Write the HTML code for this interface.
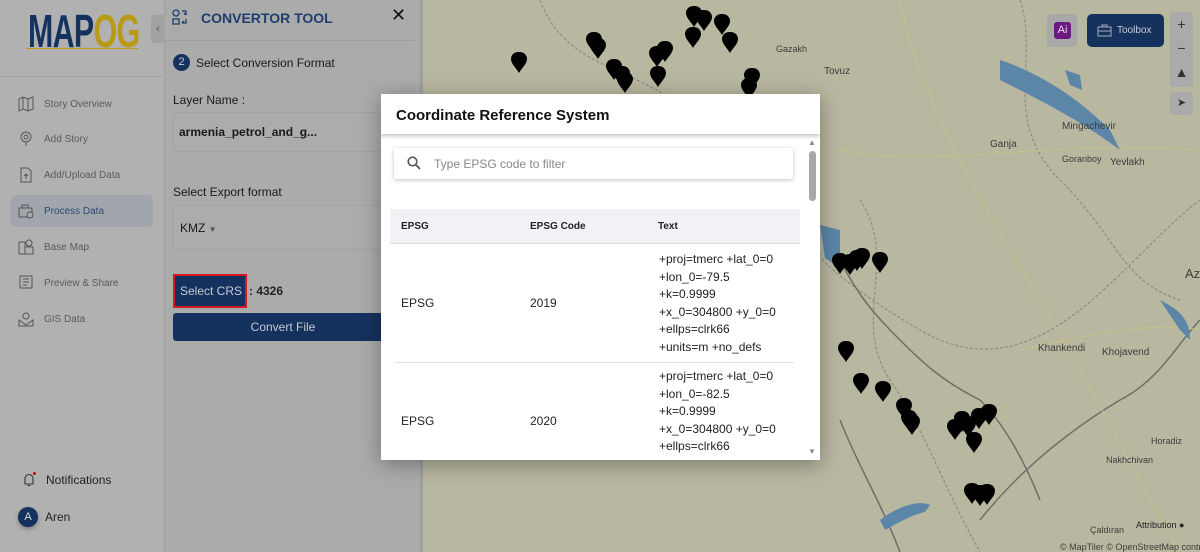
<!DOCTYPE html>
<html><head><meta charset="utf-8"><style>
*{box-sizing:border-box;margin:0;padding:0}
body{width:1200px;height:552px;overflow:hidden;position:relative;font-family:"Liberation Sans",sans-serif;background:#b5b69e}
.abs{position:absolute}
#map{left:420px;top:0;width:780px;height:552px;background:#b8b7a0;overflow:hidden}
.lbl{position:absolute;font-size:10px;color:#3c3c3c;white-space:nowrap}
#side{left:0;top:0;width:165px;height:552px;background:#b1b1b1;border-right:1px solid #9e9e9e}
#panel{left:165px;top:0;width:258px;height:552px;background:#ababab;border-right:3px solid #a0a0a0}
.nav{position:absolute;left:18px;font-size:10px;color:#5a5a5a;display:flex;align-items:center}
.nav svg{margin-right:10px}
</style></head><body>
<div id="map" class="abs">
<svg width="780" height="552" style="position:absolute;left:0;top:0">
<g fill="none" stroke="#8d8d80" stroke-width="1.2" stroke-dasharray="3,2">
<path d="M120 0 C150 80 230 60 300 140 S 380 260 500 330 S 700 260 780 200"/>
<path d="M440 200 C480 260 430 320 470 380 S 520 480 560 552"/>
<path d="M600 0 C620 60 580 120 640 180 S 700 280 760 300"/>
</g>
<g fill="none" stroke="#6e6e66" stroke-width="1.5">
<path d="M420 260 C440 300 460 320 480 340 C500 360 520 380 560 400 C580 420 600 450 620 500"/>
<path d="M420 420 C440 470 460 500 480 552"/>
<path d="M560 520 C600 470 650 430 700 400 C740 380 760 340 780 320"/>
</g>
<g fill="none" stroke="#c9c08a" stroke-width="1">
<path d="M420 150 C520 170 600 140 780 150"/><path d="M480 0 C500 100 560 200 620 300 S 700 450 760 552"/>
<path d="M600 350 C650 340 720 320 780 330"/>
</g>
<path d="M580 60 C610 70 650 90 690 130 L700 150 C660 120 620 100 580 80Z" fill="#5b86a8"/>
<path d="M645 70 L660 75 L662 90 L650 85Z" fill="#5b86a8"/>
<path d="M400 225 L420 230 L420 268 L405 258Z" fill="#5b86a8"/>
<path d="M460 520 C480 505 500 500 510 505 L505 512 C490 515 475 525 465 530Z" fill="#5b86a8"/>
<path d="M740 300 C760 310 770 320 770 340 L760 330Z" fill="#5b86a8"/>
</svg>
<div class="lbl" style="left:404px;top:66px">Tovuz</div>
<div class="lbl" style="left:356px;top:44px;font-size:9px">Gazakh</div>
<div class="lbl" style="left:642px;top:121px">Mingachevir</div>
<div class="lbl" style="left:570px;top:139px">Ganja</div>
<div class="lbl" style="left:642px;top:154px;font-size:9px">Goranboy</div>
<div class="lbl" style="left:690px;top:157px">Yevlakh</div>
<div class="lbl" style="left:618px;top:343px">Khankendi</div>
<div class="lbl" style="left:682px;top:347px">Khojavend</div>
<div class="lbl" style="left:731px;top:436px;font-size:9px">Horadiz</div>
<div class="lbl" style="left:686px;top:455px;font-size:9px">Nakhchivan</div>
<div class="lbl" style="left:670px;top:525px;font-size:9px">Çaldıran</div>
<div class="lbl" style="left:765px;top:266px;font-size:13px">Az</div>
<div class="lbl" style="left:716px;top:520px;font-size:9px;color:#222">Attribution ●</div>
<div class="lbl" style="left:640px;top:542px;font-size:9px">© MapTiler © OpenStreetMap contributors</div>
<div class="abs" style="left:627px;top:14px;width:30px;height:33px;background:#a8a8a8;border-radius:4px"><div style="margin:8px 7px;width:17px;height:17px;background:#6a1a80;border-radius:3px;color:#ddd;font-size:11px;text-align:center;line-height:17px">Ai</div></div>
<div class="abs" style="left:667px;top:14px;width:77px;height:33px;background:#15325f;border-radius:5px;color:#c8cdd6;font-size:10px;line-height:33px;padding-left:30px">Toolbox</div>
<svg class="abs" style="left:677px;top:24px" width="15" height="13"><rect x="1" y="3" width="13" height="9" fill="none" stroke="#aab" stroke-width="1"/><path d="M5 3V1H10V3 M1 7H14" fill="none" stroke="#aab"/></svg>
<div class="abs" style="left:750px;top:12px;width:23px;height:75px;background:#aaa;border-radius:3px;color:#333;font-size:14px;text-align:center;line-height:24px">+<br>−<br>▲</div>
<div class="abs" style="left:750px;top:92px;width:23px;height:23px;background:#aaa;border-radius:3px;color:#333;font-size:11px;text-align:center;line-height:23px">➤</div>
</div>
<svg class="abs" style="left:0;top:0" width="1200" height="552">
<defs><path id="p" d="M0 -14 C-6 -14 -8 -10 -8 -7 C-8 -2 -2 3 0 7 C2 3 8 -2 8 -7 C8 -10 6 -14 0 -14Z" fill="#000"/></defs>
<g>
<use href="#p" x="519" y="66"/><use href="#p" x="594" y="46"/><use href="#p" x="598" y="52"/><use href="#p" x="614" y="73"/><use href="#p" x="622" y="80"/><use href="#p" x="625" y="86"/>
<use href="#p" x="657" y="60"/><use href="#p" x="665" y="55"/><use href="#p" x="658" y="80"/><use href="#p" x="694" y="20"/><use href="#p" x="704" y="24"/><use href="#p" x="693" y="41"/><use href="#p" x="722" y="28"/><use href="#p" x="730" y="46"/><use href="#p" x="752" y="82"/><use href="#p" x="749" y="92"/>
<use href="#p" x="840" y="267"/><use href="#p" x="850" y="268"/><use href="#p" x="857" y="264"/><use href="#p" x="862" y="262"/><use href="#p" x="880" y="266"/>
<use href="#p" x="846" y="355"/><use href="#p" x="861" y="387"/><use href="#p" x="883" y="395"/><use href="#p" x="904" y="412"/><use href="#p" x="909" y="424"/><use href="#p" x="912" y="428"/>
<use href="#p" x="955" y="433"/><use href="#p" x="962" y="425"/><use href="#p" x="968" y="430"/><use href="#p" x="974" y="446"/><use href="#p" x="979" y="422"/><use href="#p" x="989" y="418"/>
<use href="#p" x="972" y="497"/><use href="#p" x="980" y="499"/><use href="#p" x="987" y="498"/>
</g></svg>
<div id="side" class="abs">
<div class="abs" style="left:28px;top:8px;font-size:46px;line-height:46px;font-weight:bold;letter-spacing:-1px;color:#14315f;transform:scaleX(0.66);transform-origin:left;white-space:nowrap">MAP<span style="color:#b89a14">OG</span></div>
<div class="abs" style="left:26px;top:48px;width:112px;height:1px;background:#b89a14"></div>
<div class="abs" style="left:0;top:76px;width:165px;height:1px;background:#a4a4a4"></div>
<div class="abs" style="left:151px;top:15px;width:14px;height:28px;background:#a2a2a2;border-radius:4px 0 0 4px;color:#555;font-size:11px;line-height:28px;text-align:center">‹</div>
<div class="abs" style="left:11px;top:195px;width:142px;height:32px;background:#a1a5ac;border-radius:5px"></div>
<div class="nav" style="top:96px"><svg width="16" height="16"><path d="M1 3 L5 1 L10 3 L15 1 V13 L10 15 L5 13 L1 15Z M5 1V13 M10 3V15" fill="none" stroke="#555" stroke-width="1"/></svg>Story Overview</div>
<div class="nav" style="top:131px"><svg width="16" height="16"><circle cx="8" cy="6" r="5" fill="none" stroke="#555"/><circle cx="8" cy="6" r="2" fill="none" stroke="#555"/><path d="M8 11V15" stroke="#555"/></svg>Add Story</div>
<div class="nav" style="top:167px"><svg width="16" height="16"><path d="M3 1H10L13 4V15H3Z M8 12V7 M6 9L8 7 10 9" fill="none" stroke="#555"/></svg>Add/Upload Data</div>
<div class="nav" style="top:203px;color:#2e4a74"><svg width="16" height="16"><path d="M1 5H14V14H1Z M4 5V2H10V5" fill="none" stroke="#555"/><circle cx="12" cy="12" r="3" fill="#aaa" stroke="#555"/></svg>Process Data</div>
<div class="nav" style="top:239px"><svg width="16" height="16"><path d="M1 3H7V15H1Z M7 8H15V15H7" fill="none" stroke="#555"/><circle cx="11" cy="4" r="3" fill="none" stroke="#555"/></svg>Base Map</div>
<div class="nav" style="top:275px"><svg width="16" height="16"><path d="M2 1H14V13H2Z M5 4H11 M5 7H11 M5 10H9" fill="none" stroke="#555"/></svg>Preview &amp; Share</div>
<div class="nav" style="top:311px"><svg width="16" height="16"><circle cx="8" cy="5" r="3" fill="none" stroke="#555"/><path d="M1 9L8 14 15 9V15H1Z" fill="none" stroke="#555"/></svg>GIS Data</div>
<svg class="abs" style="left:22px;top:473px" width="14" height="14"><path d="M3 11V6C3 3 5 1.5 7 1.5S11 3 11 6V11H2.5H11.5 M5.5 12.5H8.5" fill="none" stroke="#333" stroke-width="1.1"/></svg>
<div class="abs" style="left:33px;top:472px;width:3px;height:3px;background:#c00;border-radius:50%"></div>
<div class="abs" style="left:46px;top:473px;font-size:12px;color:#222">Notifications</div>
<div class="abs" style="left:18px;top:507px;width:20px;height:20px;border-radius:50%;background:#15325f;color:#ddd;font-size:11px;text-align:center;line-height:20px;box-shadow:0 2px 4px rgba(0,0,0,.3)">A</div>
<div class="abs" style="left:45px;top:510px;font-size:12px;color:#222">Aren</div>
</div>
<div id="panel" class="abs">
<svg class="abs" style="left:7px;top:9px" width="16" height="16"><circle cx="4" cy="4" r="3" fill="none" stroke="#1f3d6e" stroke-width="1.3"/><rect x="1" y="10" width="6" height="5" fill="none" stroke="#1f3d6e" stroke-width="1.3"/><path d="M10 2H14V6 M14 10V14H10 M12 4L14 6 M12 12L10 14" fill="none" stroke="#1f3d6e" stroke-width="1.3"/></svg>
<div class="abs" style="left:36px;top:10px;font-size:14px;font-weight:bold;color:#1f3d6e">CONVERTOR TOOL</div>
<div class="abs" style="left:226px;top:5px;font-size:18px;color:#111">✕</div>
<div class="abs" style="left:0;top:40px;width:250px;height:1px;background:#9f9f9f"></div>
<div class="abs" style="left:8px;top:54px;width:17px;height:17px;border-radius:50%;background:#15325f;color:#ccc;font-size:11px;text-align:center;line-height:17px">2</div>
<div class="abs" style="left:31px;top:56px;font-size:12px;color:#1a1a1a">Select Conversion Format</div>
<div class="abs" style="left:8px;top:93px;font-size:12px;color:#1a1a1a">Layer Name :</div>
<div class="abs" style="left:8px;top:112px;width:220px;height:40px;border:1px solid #a2a2a2;border-radius:4px;background:#acacac;font-size:12px;font-weight:bold;color:#1a1a1a;padding:12px 5px">armenia_petrol_and_g...</div>
<div class="abs" style="left:8px;top:185px;font-size:12px;color:#1a1a1a">Select Export format</div>
<div class="abs" style="left:8px;top:205px;width:220px;height:45px;border:1px solid #a2a2a2;border-radius:4px;background:#acacac;font-size:12px;color:#1a1a1a;padding:15px 6px">KMZ <span style="font-size:8px;color:#555">▼</span></div>
<div class="abs" style="left:8px;top:274px;width:74px;height:34px;border:2px solid #d01a24;background:#15325f;color:#c4c9d2;font-size:12px;padding:8px 0 0 5px;white-space:nowrap">Select CRS</div>
<div class="abs" style="left:84px;top:284px;font-size:12px;font-weight:bold;color:#222">: 4326</div>
<div class="abs" style="left:8px;top:313px;width:220px;height:28px;background:#15325f;border-radius:3px;color:#c4c9d2;font-size:12px;text-align:center;line-height:28px">Convert File</div>
</div>
<div class="abs" style="left:381px;top:94px;width:439px;height:366px;background:#fff;box-shadow:0 4px 20px rgba(0,0,0,.35);overflow:hidden">
<div style="height:40px;box-shadow:0 2px 4px rgba(0,0,0,.25);position:relative;z-index:2;font-size:15px;font-weight:bold;color:#111;padding:13px 15px">Coordinate Reference System</div>
<div class="abs" style="left:13px;top:54px;width:399px;height:31px;box-shadow:0 1px 4px rgba(0,0,0,.25);border-radius:2px;font-size:12px;color:#888;padding:9px 0 0 40px">Type EPSG code to filter</div>
<svg class="abs" style="left:26px;top:62px" width="14" height="14"><circle cx="5.5" cy="5.5" r="4.3" fill="none" stroke="#555" stroke-width="1.6"/><path d="M8.5 8.5L13 13" stroke="#555" stroke-width="1.8"/></svg>
<div class="abs" style="left:9px;top:115px;width:410px;height:35px;background:#f1f2f5;border-bottom:1px solid #ddd;font-size:10px;font-weight:bold;color:#222"><span class="abs" style="left:11px;top:12px">EPSG</span><span class="abs" style="left:140px;top:12px">EPSG Code</span><span class="abs" style="left:268px;top:12px">Text</span></div>
<div class="abs" style="left:20px;top:202px;font-size:12px;color:#222">EPSG</div>
<div class="abs" style="left:149px;top:202px;font-size:12px;color:#222">2019</div>
<div class="abs" style="left:278px;top:157px;font-size:12px;line-height:17.5px;color:#222">+proj=tmerc +lat_0=0<br>+lon_0=-79.5<br>+k=0.9999<br>+x_0=304800 +y_0=0<br>+ellps=clrk66<br>+units=m +no_defs</div>
<div class="abs" style="left:14px;top:268px;width:399px;height:1px;background:#e0e0e0"></div>
<div class="abs" style="left:20px;top:320px;font-size:12px;color:#222">EPSG</div>
<div class="abs" style="left:149px;top:320px;font-size:12px;color:#222">2020</div>
<div class="abs" style="left:278px;top:274px;font-size:12px;line-height:17.5px;color:#222">+proj=tmerc +lat_0=0<br>+lon_0=-82.5<br>+k=0.9999<br>+x_0=304800 +y_0=0<br>+ellps=clrk66</div>
<div class="abs" style="left:427px;top:44px;font-size:8px;color:#888">▲</div>
<div class="abs" style="left:428px;top:57px;width:7px;height:50px;background:#a8a8a8;border-radius:4px"></div>
<div class="abs" style="left:427px;top:353px;font-size:8px;color:#888">▼</div>
</div>
</body></html>
